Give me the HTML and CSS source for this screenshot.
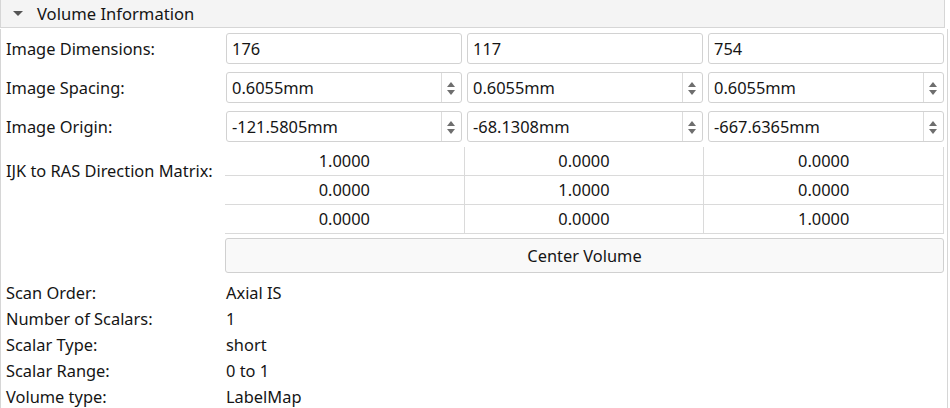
FILE: index.html
```html
<!DOCTYPE html>
<html lang="en">
<head>
    <meta charset="UTF-8">
    <meta name="viewport" content="width=device-width, initial-scale=1.0">
    <title>Volume Information</title>
    <link rel="stylesheet" href="styles.css">
</head>
<body>

    <div class="header">
        <span class="arrow"></span>
        <span class="header-title">Volume Information</span>
    </div>

    <div class="panel">
        <div class="form-row">
            <div class="label">Image Dimensions:</div>
            <div class="field"><span class="value">176</span></div>
            <div class="field"><span class="value">117</span></div>
            <div class="field"><span class="value">754</span></div>
        </div>

        <div class="form-row">
            <div class="label">Image Spacing:</div>
            <div class="field spin"><span class="value">0.6055mm</span><span class="spin-btn"></span></div>
            <div class="field spin"><span class="value">0.6055mm</span><span class="spin-btn"></span></div>
            <div class="field spin"><span class="value">0.6055mm</span><span class="spin-btn"></span></div>
        </div>

        <div class="form-row">
            <div class="label">Image Origin:</div>
            <div class="field spin"><span class="value">-121.5805mm</span><span class="spin-btn"></span></div>
            <div class="field spin"><span class="value">-68.1308mm</span><span class="spin-btn"></span></div>
            <div class="field spin"><span class="value">-667.6365mm</span><span class="spin-btn"></span></div>
        </div>

        <div class="form-row matrix-row">
            <div class="label matrix-label">IJK to RAS Direction Matrix:</div>
            <div class="matrix">
                <div class="cell">1.0000</div>
                <div class="cell">0.0000</div>
                <div class="cell">0.0000</div>
                <div class="cell">0.0000</div>
                <div class="cell">1.0000</div>
                <div class="cell">0.0000</div>
                <div class="cell">0.0000</div>
                <div class="cell">0.0000</div>
                <div class="cell">1.0000</div>
            </div>
        </div>

        <div class="form-row">
            <div class="label"></div>
            <button class="center-button">Center Volume</button>
        </div>

        <div class="info">
            <div class="info-row"><span>Scan Order:</span><span>Axial IS</span></div>
            <div class="info-row"><span>Number of Scalars:</span><span>1</span></div>
            <div class="info-row"><span>Scalar Type:</span><span>short</span></div>
            <div class="info-row"><span>Scalar Range:</span><span>0 to 1</span></div>
            <div class="info-row"><span>Volume type:</span><span>LabelMap</span></div>
        </div>
    </div>

</body>
</html>
```

FILE: styles.css
```css
body {
    margin: 0;
    background-color: #ffffff;
    color: #151515;
    font-family: "Noto Sans", "Open Sans", sans-serif;
    font-size: 16.4px;
    width: 950px;
    height: 408px;
    overflow: hidden;
}

.header {
    display: flex;
    align-items: center;
    width: 943px;
    height: 27px;
    background-color: #f4f4f4;
    border: 1px solid #d6d6d6;
    border-top: none;
}

.arrow {
    width: 0;
    height: 0;
    margin-left: 12px;
    margin-right: 14px;
    border-left: 5px solid transparent;
    border-right: 5px solid transparent;
    border-top: 5px solid #555555;
}

.header-title {
    font-size: 16.6px;
}

.panel {
    width: 938px;
    height: 376px;
    margin-top: 1px;
    padding: 4px 3px 0 5px;
    border-left: 1px solid #d6d6d6;
    border-right: 1px solid #d6d6d6;
}

.form-row {
    display: grid;
    grid-template-columns: 215px repeat(3, 1fr);
    column-gap: 5px;
    align-items: center;
    margin-bottom: 8px;
}

.label {
    white-space: nowrap;
}

.field {
    display: flex;
    align-items: center;
    height: 29px;
    border: 1px solid #d2d2d2;
    border-radius: 3px;
    background-color: #ffffff;
}

.value {
    flex: 1;
    padding-left: 5px;
}

.spin-btn {
    width: 19px;
    height: 100%;
    border-left: 1px solid #dcdcdc;
    position: relative;
}

.spin-btn::before,
.spin-btn::after {
    content: "";
    position: absolute;
    left: 5px;
    width: 0;
    height: 0;
    border-left: 4.5px solid transparent;
    border-right: 4.5px solid transparent;
}

.spin-btn::before {
    top: 9px;
    border-bottom: 5px solid #6e6e6e;
}

.spin-btn::after {
    top: 17px;
    border-top: 5px solid #6e6e6e;
}

.matrix-row {
    align-items: start;
    margin-top: -3px;
    margin-bottom: 4px;
}

.matrix-label {
    padding-top: 12px;
}

.matrix {
    grid-column: 2 / 5;
    display: grid;
    grid-template-columns: repeat(3, 1fr);
    margin-left: -1px;
}

.cell {
    height: 28px;
    line-height: 28px;
    text-align: center;
    border-right: 1px solid #dadada;
    border-bottom: 1px solid #dadada;
}

.center-button {
    grid-column: 2 / 5;
    height: 35px;
    font-family: inherit;
    font-size: 16.4px;
    color: #151515;
    background-color: #f9f9f9;
    border: 1px solid #d0d0d0;
    border-radius: 3px;
    margin-left: -1px;
}

.info {
    margin-top: -1px;
}

.info-row {
    display: grid;
    grid-template-columns: 220px 1fr;
    height: 26px;
    line-height: 26px;
}
```
